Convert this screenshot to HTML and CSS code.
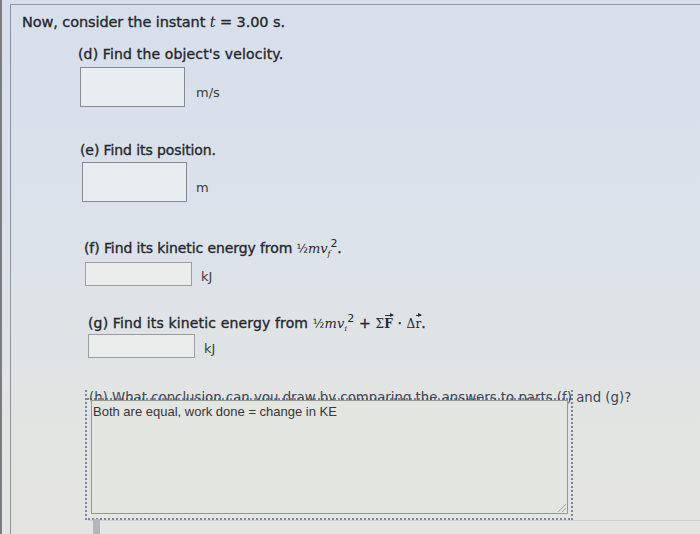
FILE: index.html
```html
<!DOCTYPE html>
<html>
<head>
<meta charset="utf-8">
<link rel="stylesheet" href="styles.css">
</head>
<body>
<div class="page">
  <p class="intro">Now, consider the instant <i class="var">t</i> = 3.00 s.</p>

  <section class="q q-d">
    <p class="qtext">(d) Find the object's velocity.</p>
    <div class="row">
      <span class="box box-big"></span>
      <span class="unit unit-low">m/s</span>
    </div>
  </section>

  <section class="q q-e">
    <p class="qtext">(e) Find its position.</p>
    <div class="row">
      <span class="box box-big"></span>
      <span class="unit unit-low">m</span>
    </div>
  </section>

  <section class="q q-f">
    <p class="qtext">(f) Find its kinetic energy from <span class="half">½</span><i class="var">mv</i><sub class="sub">f</sub><sup class="sup">2</sup>.</p>
    <div class="row">
      <span class="box box-small"></span>
      <span class="unit">kJ</span>
    </div>
  </section>

  <section class="q q-g">
    <p class="qtext">(g) Find its kinetic energy from <span class="half">½</span><i class="var">mv</i><sub class="sub">i</sub><sup class="sup">2</sup> + <span class="sigma">Σ<span class="vec">F</span></span> · <span class="delta">Δ<span class="vecr">r</span></span>.</p>
    <div class="row">
      <span class="box box-small"></span>
      <span class="unit">kJ</span>
    </div>
  </section>

  <section class="q-h">
    <p class="hlabel">(h) What conclusion can you draw by comparing the answers to parts (f) and (g)?</p>
    <div class="answer">Both are equal, work done = change in KE</div>
  </section>

  <div class="bottom">
    <span class="thumb"></span>
  </div>
</div>
</body>
</html>
```

FILE: styles.css
```css
html, body {
  margin: 0;
  padding: 0;
  height: 100%;
}
body {
  background: linear-gradient(180deg, #d7dfec 0%, #dce2ea 45%, #e2e4e3 75%, #e4e5e2 100%);
  border-left: 2px solid #7a7c80;
  box-sizing: border-box;
  overflow: hidden;
  font-family: "DejaVu Sans", Verdana, sans-serif;
  color: #25282d;
}
.page {
  margin-top: 4px;
  margin-left: 8px;
  border-top: 1px solid #9099a6;
  border-left: 1px solid #8e9298;
  height: 540px;
  padding-top: 8px;
  padding-left: 11px;
  box-sizing: border-box;
}
p { margin: 0; }
.intro {
  font-size: 14.5px;
  line-height: 18px;
  -webkit-text-stroke: 0.35px #25282d;
  letter-spacing: -0.1px;
}
.var { font-family: "DejaVu Serif", serif; font-style: italic; font-weight: normal; -webkit-text-stroke: 0; }
.q .qtext {
  font-size: 14px;
  line-height: 18px;
  -webkit-text-stroke: 0.35px #25282d;
  letter-spacing: -0.1px;
  white-space: nowrap;
}
.q-d .qtext, .q-g .qtext { letter-spacing: 0.15px; }
.q-d { margin-top: 14px; margin-left: 56px; }
.q-e { margin-top: 34px; margin-left: 58px; }
.q-f { margin-top: 37px; margin-left: 62px; }
.q-g { margin-top: 28px; margin-left: 66px; }
.row {
  display: flex;
  align-items: center;
}
.q-d .row { margin-top: 4px; margin-left: 2px; }
.q-e .row { margin-top: 3px; margin-left: 2px; }
.q-f .row { margin-top: 4px; margin-left: 1px; }
.q-g .row { margin-top: 1px; margin-left: 0; }
.box {
  display: block;
  box-sizing: border-box;
  border: 1px solid #868a90;
  background: #e8edf2;
}
.box-big { width: 105px; height: 40px; }
.box-small { width: 107px; height: 24px; border-color: #9a9e9f; background: #eaeceb; }
.unit {
  font-size: 13px;
  margin-left: 9px;
  color: #3a3d42;
}
.q-d .unit { margin-left: 11px; }
.unit-low { padding-top: 10px; }
.q-f .unit, .q-g .unit { padding-top: 4px; }
.half { font-size: 12px; -webkit-text-stroke: 0; }
.sub, .sup { line-height: 0; -webkit-text-stroke: 0; }
.sub { font-size: 8px; vertical-align: -3px; font-family: "DejaVu Serif", serif; font-style: italic; }
.sup { font-size: 11px; vertical-align: 6px; }
.q .qtext i.var { font-size: 13px; }
.sigma, .delta { font-family: "DejaVu Serif", serif; font-size: 12px; -webkit-text-stroke: 0; }
.vec, .vecr { position: relative; }
.vec { font-weight: bold; }
.vec::before, .vecr::before {
  content: "";
  position: absolute;
  left: 1px;
  right: 0;
  top: -2px;
  height: 1px;
  background: #2b2e33;
}
.vec::after, .vecr::after {
  content: "";
  position: absolute;
  right: -1px;
  top: -4px;
  border-left: 4px solid #2b2e33;
  border-top: 2.5px solid transparent;
  border-bottom: 2.5px solid transparent;
}
.q-h {
  margin-top: 32px;
  margin-left: 63px;
  width: 488px;
  border-left: 2px dotted #7a84a6;
  border-right: 2px dotted #7a84a6;
  border-bottom: 2px dotted #7a84a6;
  padding: 0 3px 4px 4px;
  box-sizing: border-box;
}
.hlabel {
  font-size: 13.3px;
  line-height: 16px;
  height: 8px;
  color: #3f4552;
  white-space: nowrap;
  border-bottom: 2px dotted #7a84a6;
  margin: 0 -3px 0 -4px;
  padding-left: 2px;
  overflow: visible;
}
.answer {
  margin-top: 0;
  height: 114px;
  box-sizing: border-box;
  border: 1px solid #959a8f;
  background: #e3e5e1;
  font-family: "Liberation Sans", Arial, sans-serif;
  font-size: 13px;
  line-height: 16px;
  padding: 3px 1px;
  color: #34373b;
  position: relative;
}
.answer::after {
  content: "";
  position: absolute;
  right: 1px;
  bottom: 1px;
  width: 8px;
  height: 8px;
  background: linear-gradient(135deg, transparent 45%, #a4a79f 46%, #a4a79f 54%, transparent 55%, transparent 70%, #a4a79f 71%, #a4a79f 79%, transparent 80%);
}
.bottom {
  margin-left: 66px;
  border-top: 1px solid #cfd1cc;
  height: 20px;
}
.thumb {
  display: block;
  width: 7px;
  height: 16px;
  margin-top: -2px;
  margin-left: 5px;
  background: #b3b6bb;
}
```
